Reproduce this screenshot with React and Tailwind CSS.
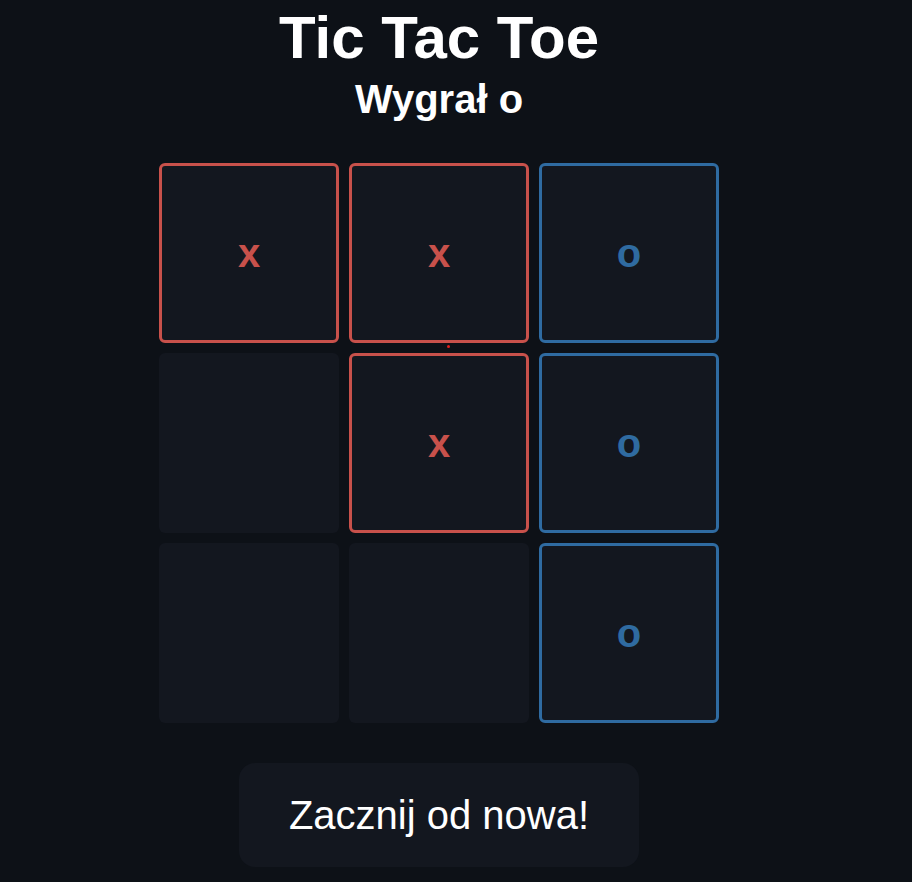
import React, { useState } from "react";

const initialBoard = ["x", "x", "o", null, "x", "o", null, null, "o"];

const Cell = ({ value, onClick }) => {
	const border =
		value === "x"
			? "border-[3px] border-[#c8514b] text-[#c8514b]"
			: value === "o"
			? "border-[3px] border-[#2f6ba1] text-[#2f6ba1]"
			: "border-[3px] border-transparent";
	return (
		<button
			onClick={onClick}
			className={`w-[180px] h-[180px] rounded-[6px] bg-[#13171f] flex items-center justify-center font-bold text-[40px] leading-none ${border}`}>
			{value}
		</button>
	);
};

const App = () => {
	const [board, setBoard] = useState(initialBoard);
	const winner = "o";

	return (
		<div
			className="min-h-[882px] w-full bg-[#0d1117] text-white"
			style={{ fontFamily: '"Liberation Sans", Arial, sans-serif' }}>
			<div className="w-[878px] flex flex-col items-center pt-[3px]">
				<h1 className="text-[60px] font-bold leading-[1.15]">Tic Tac Toe</h1>
				<h2 className="mt-[4px] text-[40px] font-bold leading-[1.15]">Wygrał {winner}</h2>

				<div className="relative mt-[41px] grid grid-cols-3 gap-[10px]">
					{board.map((v, i) => (
						<Cell key={i} value={v} />
					))}
					{/* stray marker between the first two rows */}
					<span className="absolute left-[288px] top-[182px] w-[3px] h-[3px] rounded-full bg-[#e0201c]" />
				</div>

				<button
					onClick={() => setBoard(Array(9).fill(null))}
					className="mt-[40px] w-[400px] h-[104px] rounded-[16px] bg-[#13171f] text-[40px] leading-none text-white">
					Zacznij od nowa!
				</button>
			</div>
		</div>
	);
};

export default App;
